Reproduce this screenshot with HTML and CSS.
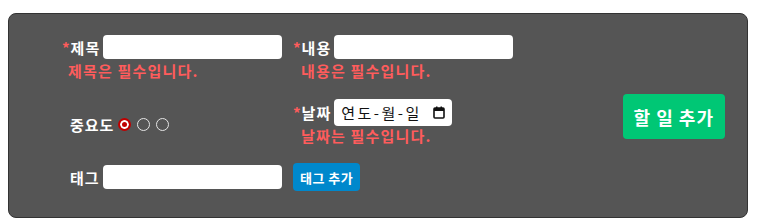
FILE: index.html
```html
<!DOCTYPE html>
<html>
<head>
    <title>할 일 추가</title>
<link rel="stylesheet" href="styles.css">
</head>

<body>

    <form class="todo-form">
        <!-- 제목 -->
        <div class="field">
            <div class="field-line">
                <label class="field-label"><span class="req">*</span>제목</label>
                <input type="text" class="text-input">
            </div>
            <div class="error-msg">제목은 필수입니다.</div>
        </div>

        <!-- 내용 -->
        <div class="field">
            <div class="field-line">
                <label class="field-label"><span class="req">*</span>내용</label>
                <input type="text" class="text-input">
            </div>
            <div class="error-msg wide">내용은 필수입니다.</div>
        </div>

        <div class="spacer"></div>

        <!-- 중요도 -->
        <div class="field field-center">
            <div class="field-line">
                <label class="field-label plain">중요도</label>
                <div class="radio-group">
                    <input type="radio" name="priority" class="radio" checked>
                    <input type="radio" name="priority" class="radio">
                    <input type="radio" name="priority" class="radio">
                </div>
            </div>
        </div>

        <!-- 날짜 -->
        <div class="field">
            <div class="field-line">
                <label class="field-label"><span class="req">*</span>날짜</label>
                <div class="date-input">
                    <span class="date-text">연도-월-일</span>
                    <svg class="cal-icon" width="12" height="13" viewBox="0 0 12 13">
                        <rect x="1" y="2" width="10" height="10" rx="1" fill="none" stroke="#111" stroke-width="1.6"/>
                        <rect x="1" y="2" width="10" height="3" fill="#111"/>
                        <rect x="3" y="0.5" width="1.5" height="2" fill="#111"/>
                        <rect x="7.5" y="0.5" width="1.5" height="2" fill="#111"/>
                    </svg>
                </div>
            </div>
            <div class="error-msg wide">날짜는 필수입니다.</div>
        </div>

        <div class="submit-cell">
            <button type="button" class="add-todo-btn">할 일 추가</button>
        </div>

        <!-- 태그 -->
        <div class="field">
            <div class="field-line">
                <label class="field-label plain">태그</label>
                <input type="text" class="text-input">
            </div>
        </div>

        <div class="field">
            <div class="field-line">
                <button type="button" class="add-tag-btn">태그 추가</button>
            </div>
        </div>

        <div class="spacer"></div>
    </form>

</body>
</html>
```

FILE: styles.css
```css
/* General Styling */
body {
    font-family: "Noto Sans CJK KR", "Noto Sans", sans-serif;
    background-color: #fff;
    margin: 13px 14px 6px 8px;
    padding: 0;
}

/* Form Container */
.todo-form {
    display: grid;
    grid-template-columns: 220px 220px 1fr;
    column-gap: 11px;
    row-gap: 17px;
    align-items: start;
    padding: 19px 22px 26px 53px;
    background: #555;
    border: 1px solid #333;
    border-radius: 8px;
}

.field {
    display: flex;
    flex-direction: column;
}

.field-center {
    align-self: center;
    padding-top: 4px;
}

.field-line {
    display: flex;
    align-items: center;
    height: 28px;
}

.field-label {
    color: #fff;
    font-size: 15px;
    font-weight: bold;
    letter-spacing: 1px;
    white-space: nowrap;
    margin-right: 3px;
}

.field-label.plain {
    padding-left: 8px;
}

.req {
    color: #ff5c5c;
    letter-spacing: 0;
    margin-right: 1px;
}

.text-input {
    width: 179px;
    height: 24px;
    box-sizing: border-box;
    border: none;
    border-radius: 4px;
    background: #fff;
    padding: 0 6px;
}

/* Error text */
.error-msg {
    color: #ff5c5c;
    font-size: 15px;
    font-weight: bold;
    letter-spacing: 1.2px;
    margin-left: 6px;
    margin-top: 0;
    line-height: 20px;
}

.error-msg.wide {
    margin-left: 8px;
}

/* Radios */
.radio-group {
    display: flex;
    gap: 6px;
    margin-left: 1px;
}

.radio {
    appearance: none;
    width: 13px;
    height: 13px;
    margin: 0;
    border: 1px solid #e6e6e6;
    border-radius: 50%;
    background: transparent;
    box-sizing: border-box;
}

.radio:checked {
    border: 2px solid #c00000;
    background: #c00000;
    box-shadow: inset 0 0 0 2px #fff;
}

/* Fake date field */
.date-input {
    display: flex;
    align-items: center;
    justify-content: space-between;
    width: 118px;
    height: 27px;
    box-sizing: border-box;
    padding: 0 7px 0 7px;
    background: #fff;
    border-radius: 4px;
}

.date-text {
    font-size: 15px;
    color: #111;
    letter-spacing: 2.5px;
}

/* Buttons */
.submit-cell {
    display: flex;
    justify-content: flex-end;
    margin-top: -4px;
}

.add-todo-btn {
    background-color: #00c775;
    color: white;
    border: none;
    border-radius: 4px;
    padding: 0 11px;
    height: 45px;
    font-family: inherit;
    font-size: 18px;
    font-weight: bold;
    letter-spacing: 1px;
}

.add-tag-btn {
    background-color: #0088cc;
    color: white;
    border: none;
    border-radius: 4px;
    height: 28px;
    padding: 0 7px;
    font-family: inherit;
    font-size: 13px;
    font-weight: bold;
    letter-spacing: 0.5px;
}
```
